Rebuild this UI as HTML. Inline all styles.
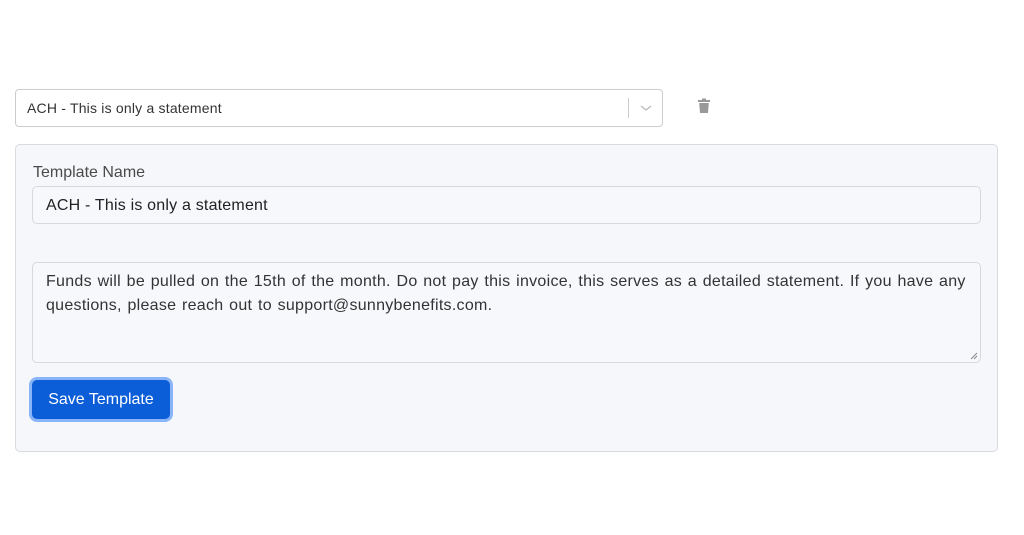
<!DOCTYPE html>
<html><head><style>
body{margin:0;width:1024px;height:535px;background:#fff;font-family:"Liberation Sans",sans-serif;position:relative;overflow:hidden}
.sel{position:absolute;left:15px;top:89px;width:646px;height:36px;border:1px solid #ccc;border-radius:4px;background:#fff}
.sel span{position:absolute;left:11px;top:10px;font-size:14px;color:#333;letter-spacing:0.2px}
.sel .sep{position:absolute;left:612px;top:8px;width:1px;height:20px;background:#ccc}
.sel svg{position:absolute;left:624px;top:13px}
.panel{position:absolute;left:15px;top:144px;width:981px;height:306px;border:1px solid #d8dadf;border-radius:5px;background:#f6f7fa}
.lbl{position:absolute;left:33px;top:164px;font-size:16px;color:#4a4a4a}
.inp{position:absolute;left:32px;top:186px;width:947px;height:36px;border:1px solid #d6d8dc;border-radius:5px;background:#f7f8fb}
.inp span{position:absolute;left:13px;top:10px;font-size:16px;color:#222;letter-spacing:0.2px}
.ta{position:absolute;left:32px;top:262px;width:947px;height:99px;border:1px solid #d6d8dc;border-radius:5px;background:#f7f8fb}
.ta div{position:absolute;left:13px;font-size:16px;color:#333;white-space:nowrap;word-spacing:1px;letter-spacing:0.28px}
.btn{position:absolute;left:32px;top:380px;width:138px;height:39px;background:#0b5ed7;border-radius:5px;box-shadow:0 0 0 3px #8ab4f8;color:#fff;font-size:16px;line-height:39px;text-align:center}
</style></head><body>
<div class="sel"><span>ACH - This is only a statement</span><div class="sep"></div>
<svg width="12" height="10" viewBox="0 0 12 10"><path d="M1 3l5 4 5-4" fill="none" stroke="#bbb" stroke-width="1.3"/></svg></div>
<svg style="position:absolute;left:697px;top:98px" width="14" height="16" viewBox="0 0 14 16"><rect x="1" y="2" width="12" height="2" fill="#999"/><rect x="5" y="0.5" width="4" height="2" fill="#999"/><path d="M2.2 5h9.6l-0.8 10H3z" fill="#999"/></svg>
<div class="panel"></div>
<div class="lbl">Template Name</div>
<div class="inp"><span>ACH - This is only a statement</span></div>
<div class="ta">
<div style="top:10px">Funds will be pulled on the 15th of the month. Do not pay this invoice, this serves as a detailed statement. If you have any</div>
<div style="top:34px">questions, please reach out to support@sunnybenefits.com.</div>
<svg style="position:absolute;right:2px;bottom:2px" width="8" height="8"><path d="M1 7L7 1M4 7L7 4" stroke="#888"/></svg>
</div>
<div class="btn">Save Template</div>
</body></html>
